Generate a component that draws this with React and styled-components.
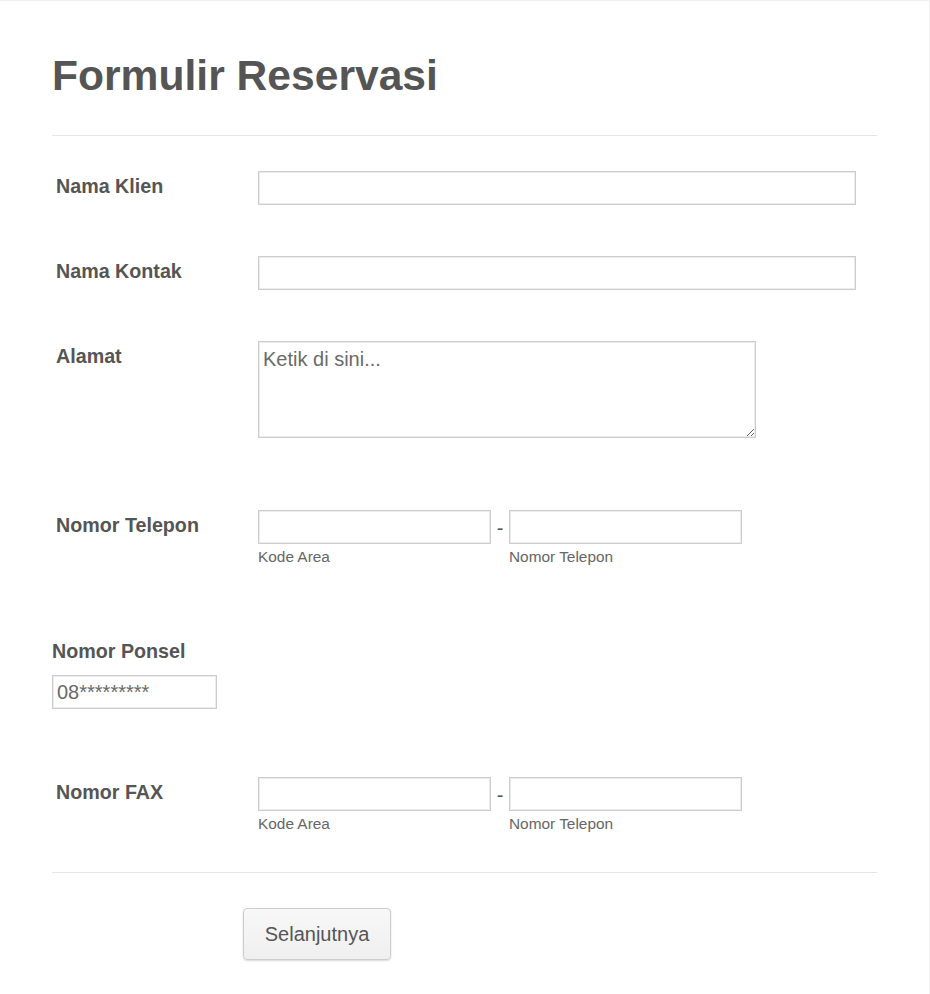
import React from "react";
import styled, { createGlobalStyle } from "styled-components";

const GlobalStyle = createGlobalStyle`
  html, body {
    margin: 0;
    padding: 0;
    background: #fff;
  }
  body {
    font-family: "Liberation Sans", Arial, sans-serif;
    color: #555;
  }
  * {
    box-sizing: border-box;
  }
`;

const Page = styled.div`
  width: 930px;
  min-height: 994px;
  padding: 0 52px;
  border-top: 1px solid #f0f0f0;
  border-right: 1px solid #f0f0f0;
`;

const Header = styled.div`
  padding: 50px 0 36px;
  border-bottom: 1px solid #e6e6e6;
`;

const Title = styled.h1`
  margin: 0;
  font-size: 42.6px;
  line-height: 48px;
  font-weight: 700;
  color: #555;
`;

const FieldList = styled.div`
  display: flex;
  flex-direction: column;
`;

const Row = styled.div`
  display: flex;
  flex-direction: ${(p) => (p.$stacked ? "column" : "row")};
  align-items: flex-start;
  margin-top: ${(p) => p.$top}px;
  padding: 0 ${(p) => (p.$stacked ? 0 : 4)}px;
`;

const Label = styled.label`
  width: ${(p) => (p.$stacked ? "auto" : "202px")};
  flex-shrink: 0;
  padding-top: ${(p) => (p.$stacked ? 0 : 4)}px;
  margin-bottom: ${(p) => (p.$stacked ? 13 : 0)}px;
  font-size: 19.7px;
  line-height: 22px;
  font-weight: 700;
  color: #555;
`;

const fieldBase = `
  display: block;
  border: 1px solid #cdcdcd;
  box-shadow: inset 0 0 0 1px #ececec;
  background: #fff;
  font-family: "Liberation Sans", Arial, sans-serif;
  font-size: 20px;
  color: #555;
  outline: none;
  margin: 0;
  &::placeholder {
    color: #6a6a6a;
  }
`;

const TextInput = styled.input`
  ${fieldBase}
  width: ${(p) => p.$width}px;
  height: 34px;
  padding: 0 4px;
`;

const TextArea = styled.textarea`
  ${fieldBase}
  width: 498px;
  height: 97px;
  padding: 6px 4px;
  line-height: 22px;
  resize: both;
`;

const PhoneGroup = styled.div`
  display: flex;
  align-items: flex-start;
`;

const PhonePart = styled.div`
  display: flex;
  flex-direction: column;
`;

const Dash = styled.span`
  width: 18px;
  height: 34px;
  display: flex;
  align-items: center;
  justify-content: center;
  font-size: 20px;
  color: #555;
  padding-top: 2px;
`;

const SubLabel = styled.span`
  margin-top: 4px;
  font-size: 15.4px;
  line-height: 17px;
  color: #666;
`;

const Divider = styled.div`
  margin-top: 40px;
  border-top: 1px solid #e6e6e6;
`;

const ButtonBar = styled.div`
  padding: 35px 0 0 191px;
`;

const NextButton = styled.button`
  width: 148px;
  height: 52px;
  border: 1px solid #cccccc;
  border-radius: 4px;
  background: linear-gradient(#f8f8f8, #efefef);
  box-shadow: 0 1px 2px rgba(0, 0, 0, 0.15);
  font-family: "Liberation Sans", Arial, sans-serif;
  font-size: 20px;
  color: #555;
  cursor: pointer;
`;

function PhoneField() {
  return (
    <PhoneGroup>
      <PhonePart>
        <TextInput $width={233} />
        <SubLabel>Kode Area</SubLabel>
      </PhonePart>
      <Dash>-</Dash>
      <PhonePart>
        <TextInput $width={233} />
        <SubLabel>Nomor Telepon</SubLabel>
      </PhonePart>
    </PhoneGroup>
  );
}

export default function App() {
  return (
    <>
      <GlobalStyle />
      <Page>
        <Header>
          <Title>Formulir Reservasi</Title>
        </Header>
        <FieldList>
          <Row $top={35}>
            <Label>Nama Klien</Label>
            <TextInput $width={598} />
          </Row>
          <Row $top={51}>
            <Label>Nama Kontak</Label>
            <TextInput $width={598} />
          </Row>
          <Row $top={51}>
            <Label>Alamat</Label>
            <TextArea placeholder="Ketik di sini..." />
          </Row>
          <Row $top={72}>
            <Label>Nomor Telepon</Label>
            <PhoneField />
          </Row>
          <Row $top={75} $stacked>
            <Label $stacked>Nomor Ponsel</Label>
            <TextInput $width={165} placeholder="08*********" />
          </Row>
          <Row $top={68}>
            <Label>Nomor FAX</Label>
            <PhoneField />
          </Row>
        </FieldList>
        <Divider />
        <ButtonBar>
          <NextButton>Selanjutnya</NextButton>
        </ButtonBar>
      </Page>
    </>
  );
}
